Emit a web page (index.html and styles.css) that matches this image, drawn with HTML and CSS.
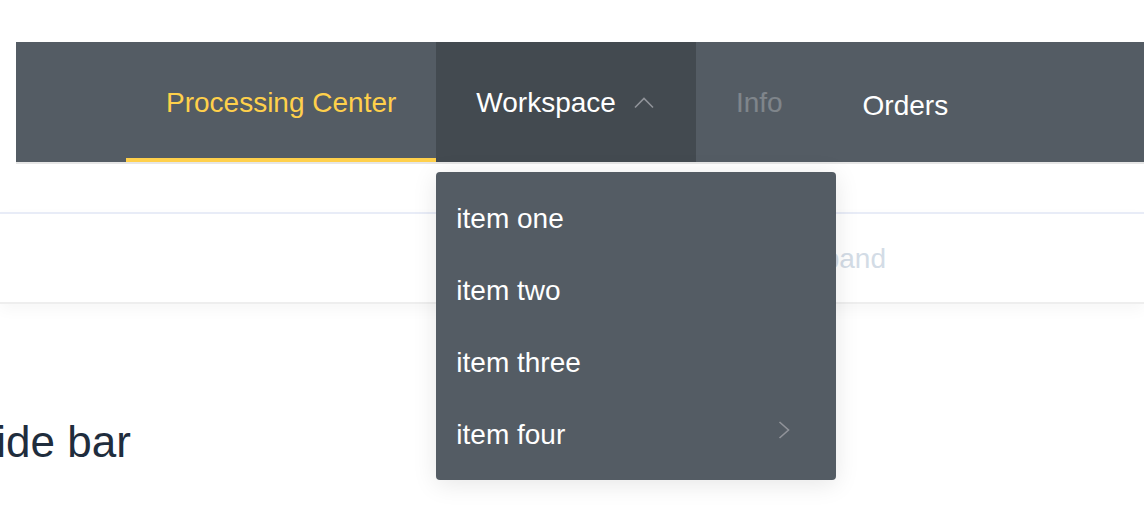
FILE: index.html
```html
<!DOCTYPE html>
<html lang="en">
<head>
<meta charset="utf-8">
<title>Menu</title>
<link rel="stylesheet" href="styles.css">
</head>
<body>
  <nav class="nav">
    <ul class="menu">
      <li class="menu-item is-active">Processing Center</li>
      <li class="menu-item submenu is-open">
        <span>Workspace</span>
        <svg class="arrow-up" width="24" height="24" viewBox="0 0 24 24" aria-hidden="true"><path d="M3 16.5 L12 7.5 L21 16.5" fill="none" stroke="#909399" stroke-width="1.6"/></svg>
        <ul class="popup">
          <li class="popup-item">item one</li>
          <li class="popup-item">item two</li>
          <li class="popup-item">item three</li>
          <li class="popup-item">
            <span>item four</span>
            <svg class="arrow-right" width="24" height="24" viewBox="0 0 24 24" aria-hidden="true"><path d="M7.5 4 L16.5 12 L7.5 20" fill="none" stroke="#909399" stroke-width="1.6"/></svg>
          </li>
        </ul>
      </li>
      <li class="menu-item is-disabled">Info</li>
      <li class="menu-item"><a class="link" href="#">Orders</a></li>
    </ul>
  </nav>

  <div class="band">
    <span class="band-text">Broadband</span>
  </div>

  <h3 class="side-title">Side bar</h3>
</body>
</html>
```

FILE: styles.css
```css
body {
  margin: 0;
  padding: 0;
  min-height: 506px;
  background: #ffffff;
  font-family: "Liberation Sans", Arial, Helvetica, sans-serif;
}

.nav {
  margin: 0 0 0 16px;
  padding-top: 42px;
}

.menu {
  list-style: none;
  margin: 0;
  padding: 0 0 0 110px;
  display: flex;
  background: #545c64;
  border-bottom: 2px solid #e6e6e6;
  height: 120px;
}

.menu-item {
  position: relative;
  box-sizing: border-box;
  height: 120px;
  padding: 6px 40px 0;
  border-bottom: 4px solid transparent;
  display: flex;
  align-items: center;
  font-size: 28px;
  color: #ffffff;
  white-space: nowrap;
}

.menu-item.is-active {
  color: #ffd04b;
  border-bottom-color: #ffd04b;
}

.menu-item.submenu.is-open {
  background: #434a50;
}

.menu-item.is-disabled {
  color: #ffffff;
  opacity: 0.25;
}

.link {
  color: #ffffff;
  text-decoration: none;
  display: inline-block;
  margin-top: 6px;
}

.arrow-up {
  display: block;
  margin-left: 16px;
  margin-top: -1px;
}

.popup {
  position: absolute;
  top: 130px;
  left: 0;
  width: 400px;
  box-sizing: border-box;
  margin: 0;
  padding: 10px 0;
  list-style: none;
  background: #545c64;
  border-radius: 4px;
  box-shadow: 0 4px 24px 0 rgba(0, 0, 0, 0.1);
  z-index: 10;
}

.popup-item {
  box-sizing: border-box;
  height: 72px;
  padding: 2px 40px 0 20px;
  display: flex;
  align-items: center;
  justify-content: space-between;
  font-size: 28px;
  color: #ffffff;
}

.arrow-right {
  display: block;
  margin-top: -10px;
}

.band {
  margin-top: 48px;
  height: 86px;
  border-top: 2px solid #e8ecf7;
  border-bottom: 2px solid #eeeeee;
  box-shadow: 0 6px 14px rgba(0, 0, 0, 0.035);
  display: flex;
  align-items: center;
  padding: 2px 0 0 749px;
  box-sizing: content-box;
}

.band-text {
  font-size: 28px;
  color: #d3dce6;
  white-space: nowrap;
}

.side-title {
  margin: 116px 0 0 -33px;
  font-size: 44px;
  line-height: 44px;
  font-weight: normal;
  color: #1f2d3d;
  white-space: nowrap;
}
```
